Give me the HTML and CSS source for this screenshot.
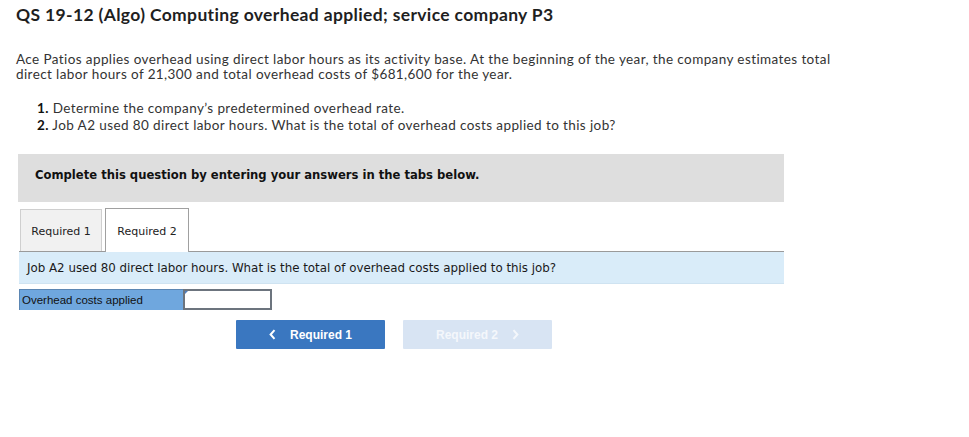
FILE: index.html
```html
<!DOCTYPE html>
<html>
<head>
<meta charset="utf-8">
<link rel="stylesheet" href="styles.css">
</head>
<body>
<div class="page">
  <h1 class="title">QS 19-12 (Algo) Computing overhead applied; service company P3</h1>
  <p class="intro">Ace Patios applies overhead using direct labor hours as its activity base. At the beginning of the year, the company estimates total direct labor hours of 21,300 and total overhead costs of $681,600 for the year.</p>
  <ol class="reqs">
    <li><b>1.</b> Determine the company’s predetermined overhead rate.</li>
    <li><b>2.</b> Job A2 used 80 direct labor hours. What is the total of overhead costs applied to this job?</li>
  </ol>
  <div class="notice">Complete this question by entering your answers in the tabs below.</div>
  <div class="tabs">
    <div class="tab">Required 1</div>
    <div class="tab active">Required 2</div>
  </div>
  <div class="info">Job A2 used 80 direct labor hours. What is the total of overhead costs applied to this job?</div>
  <div class="answer">
    <div class="label">Overhead costs applied</div>
    <div class="input"><span class="marker"></span></div>
  </div>
  <div class="nav">
    <button class="btn prev"><svg class="chev" width="7" height="11" viewBox="0 0 7 11"><path d="M5.5 1.2 L1.6 5.5 L5.5 9.8" fill="none" stroke="currentColor" stroke-width="2"/></svg><span>Required 1</span></button>
    <button class="btn next"><span>Required 2</span><svg class="chev" width="7" height="11" viewBox="0 0 7 11"><path d="M1.5 1.2 L5.4 5.5 L1.5 9.8" fill="none" stroke="currentColor" stroke-width="2"/></svg></button>
  </div>
</div>
</body>
</html>
```
FILE: styles.css
```css
html, body { margin: 0; padding: 0; background: #fff; }
.page { padding: 5px 0 0 16px; width: 830px; }
.title {
  margin: 0;
  font-family: Lato, "Liberation Sans", sans-serif;
  font-weight: 700;
  font-size: 17.5px;
  letter-spacing: 0.35px;
  line-height: 20px;
  color: #1f1f1f;
}
.intro {
  margin: 27px 0 0 0;
  font-family: Lato, "Liberation Sans", sans-serif;
  font-size: 13.5px;
  letter-spacing: 0.4px;
  line-height: 15px;
  color: #333;
}
.reqs {
  list-style: none;
  margin: 18px 0 0 0;
  padding: 0 0 0 21px;
  font-family: Lato, "Liberation Sans", sans-serif;
  font-size: 13.5px;
  letter-spacing: 0.4px;
  line-height: 17px;
  color: #333;
}
.reqs b { color: #111; }
.notice {
  margin: 20px 0 0 2px;
  height: 48px;
  padding: 13px 0 0 17px;
  box-sizing: border-box;
  width: 766px;
  background: #dedede;
  font-family: "DejaVu Sans Condensed", "DejaVu Sans", sans-serif;
  font-weight: 700;
  font-size: 12.9px;
  line-height: 16px;
  color: #111;
}
.tabs {
  margin: 6px 0 0 3px;
  width: 765px;
  display: flex;
  align-items: flex-end;
  gap: 3px;
  border-bottom: 1px solid #9a9a9a;
  padding-left: 1px;
  box-sizing: border-box;
}
.tab {
  height: 42px;
  width: 82px;
  box-sizing: border-box;
  display: flex;
  align-items: center;
  justify-content: center;
  padding-top: 1px;
  background: #f1f1f1;
  border: 1px solid #cfcfcf;
  border-bottom: none;
  font-family: "DejaVu Sans", sans-serif;
  font-size: 11px;
  color: #222;
}
.tab.active {
  height: 44px;
  width: 84px;
  background: #fff;
  border-color: #a0a0a0;
  margin-bottom: -1px;
}
.info {
  margin: 0 0 0 3px;
  width: 765px;
  height: 32px;
  box-sizing: border-box;
  padding: 1px 0 0 8px;
  display: flex;
  align-items: center;
  background: #d9ecf9;
  border-bottom: 1px solid #cfe3f1;
  font-family: "DejaVu Sans", sans-serif;
  font-size: 11.85px;
  color: #1a1a1a;
}
.answer {
  margin: 5px 0 0 3px;
  display: flex;
  height: 21px;
}
.label {
  width: 164px;
  box-sizing: border-box;
  background: #6fa7de;
  border-top: 1px solid #5b86b3;
  border-left: 1px solid #5b86b3;
  padding-left: 2px;
  display: flex;
  align-items: center;
  font-family: "Liberation Sans", Arial, sans-serif;
  font-size: 11.5px;
  color: #111;
}
.input {
  position: relative;
  width: 89px;
  box-sizing: border-box;
  border: 2px solid #6c747e;
  background: #fff;
}
.marker {
  position: absolute;
  top: 0;
  left: 0;
  width: 0;
  height: 0;
  border-top: 3px solid #4f7fc0;
  border-right: 3px solid transparent;
}
.nav {
  margin: 10px 0 0 220px;
  display: flex;
  gap: 18px;
}
.btn {
  width: 149px;
  height: 29px;
  border: none;
  border-radius: 1px;
  font-family: "Liberation Sans", Arial, sans-serif;
  font-weight: 700;
  font-size: 12px;
  color: #fff;
  display: flex;
  align-items: center;
  justify-content: center;
  gap: 14px;
  padding: 0;
}
.btn .chev { display: block; }
.prev { background: #3a77c0; }
.next { background: #d8e4f3; color: #f4f7fb; }
```
